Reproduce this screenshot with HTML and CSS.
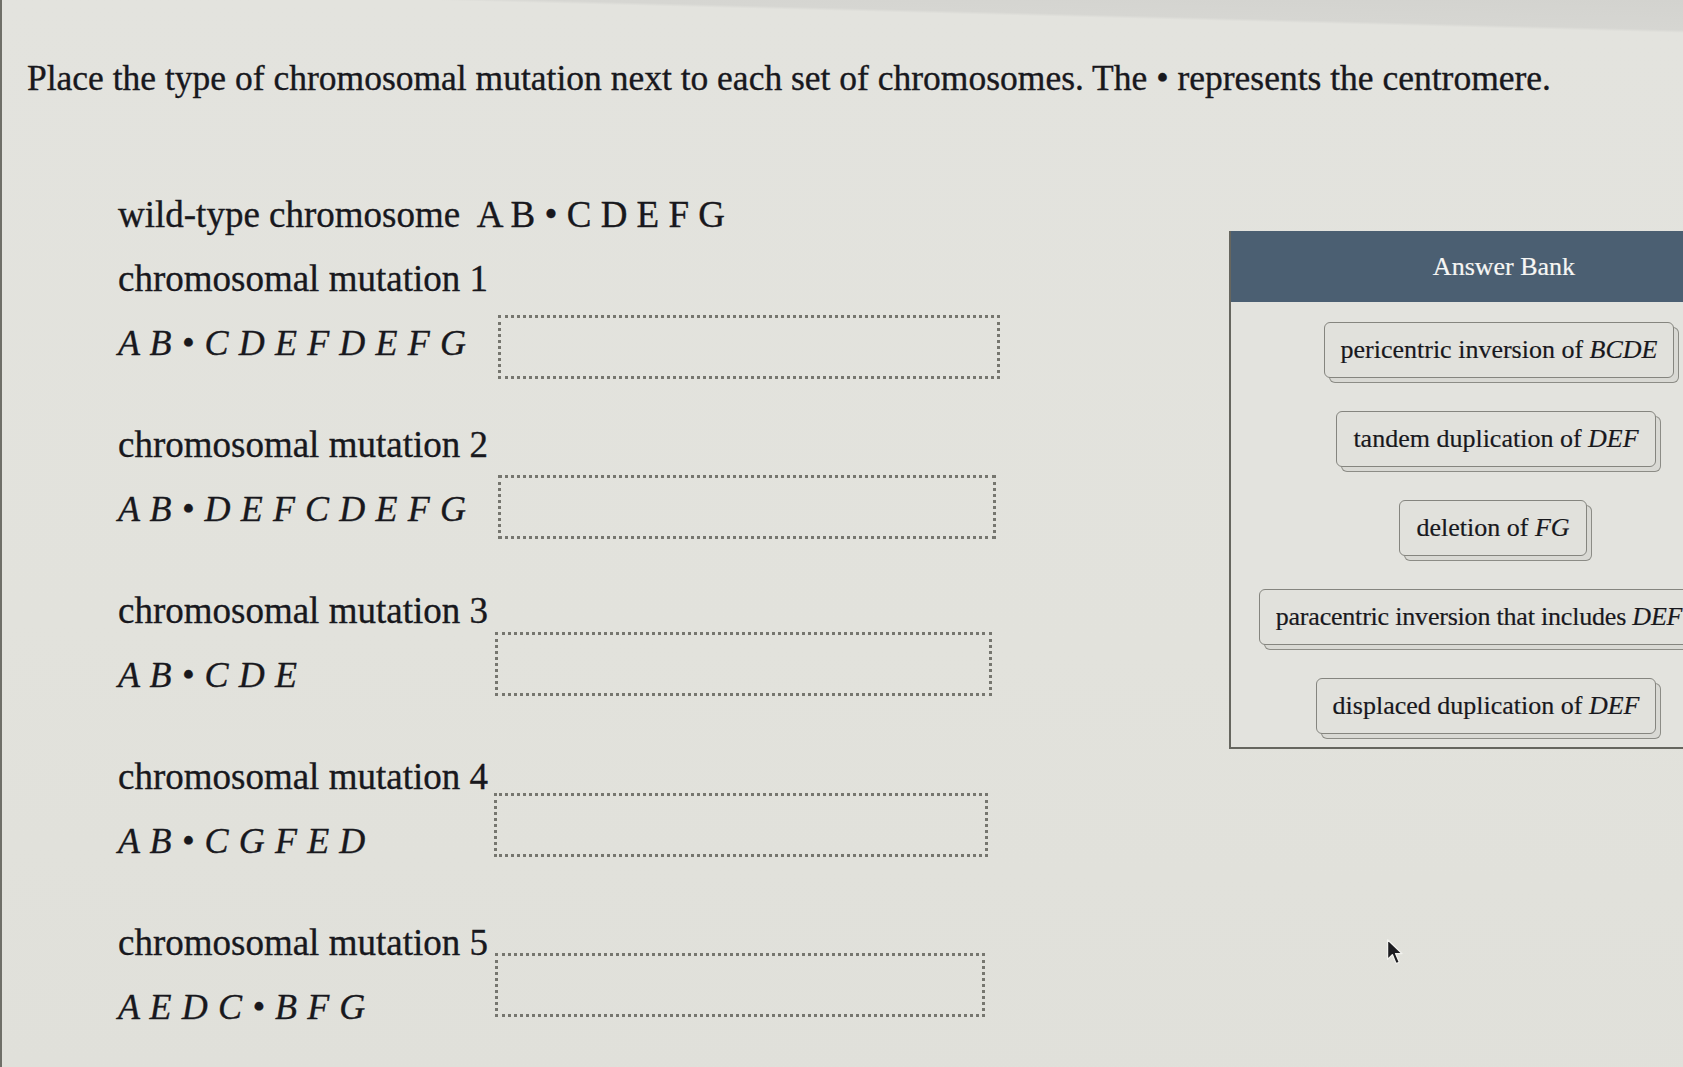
FILE: index.html
```html
<!DOCTYPE html>
<html lang="en">
<head>
<meta charset="utf-8">
<title>Chromosomal mutations</title>
<link rel="stylesheet" href="styles.css">
</head>
<body>
<div class="page">
  <h1 class="prompt">Place the type of chromosomal mutation next to each set of chromosomes. The • represents the centromere.</h1>
  <div class="content">
    <section class="questions">
      <div class="wild">wild-type chromosome&nbsp; A B • C D E F G</div>

      <div class="block">
        <div class="label">chromosomal mutation 1</div>
        <div class="seq">A B • C D E F D E F G</div>
        <div class="drop d1"></div>
      </div>

      <div class="block">
        <div class="label">chromosomal mutation 2</div>
        <div class="seq">A B • D E F C D E F G</div>
        <div class="drop d2"></div>
      </div>

      <div class="block">
        <div class="label">chromosomal mutation 3</div>
        <div class="seq">A B • C D E</div>
        <div class="drop d3"></div>
      </div>

      <div class="block">
        <div class="label">chromosomal mutation 4</div>
        <div class="seq">A B • C G F E D</div>
        <div class="drop d4"></div>
      </div>

      <div class="block">
        <div class="label">chromosomal mutation 5</div>
        <div class="seq">A E D C • B F G</div>
        <div class="drop d5"></div>
      </div>
    </section>

    <aside class="bank">
      <div class="bank-head">Answer Bank</div>
      <div class="bank-body">
        <div class="chip c1">pericentric inversion of <i>BCDE</i></div>
        <div class="chip c2">tandem duplication of <i>DEF</i></div>
        <div class="chip c3">deletion of <i>FG</i></div>
        <div class="chip c4">paracentric inversion that includes <i>DEF</i></div>
        <div class="chip c5">displaced duplication of <i>DEF</i></div>
      </div>
    </aside>
  </div>

  <svg class="cursor" width="17" height="30" viewBox="0 0 16 28" aria-hidden="true">
    <path d="M1.5 1.5 L1.5 20 L6 15.5 L9.5 24 L12.5 22.7 L9 14.5 L15 14.5 Z" fill="#1c1c20" stroke="#f2f2ee" stroke-width="1.2" stroke-linejoin="round"/>
  </svg>
</div>
</body>
</html>
```

FILE: styles.css
```css
html, body {
  margin: 0;
  padding: 0;
  width: 1683px;
  height: 1067px;
  overflow: hidden;
}

body {
  font-family: "Liberation Serif", "Times New Roman", serif;
  color: #18181d;
  background:
    linear-gradient(181.5deg, #d3d3cf 0, #d6d6d2 30px, #e3e3de 33px, #e2e2dc 60%, #e0e0da 100%);
}

.page {
  position: relative;
  height: 1067px;
  box-sizing: border-box;
  border-left: 2px solid #6f6f68;
  padding-left: 25px;
  overflow: hidden;
  -webkit-text-stroke: 0.35px currentColor;
}

.prompt {
  margin: 58px 0 0 0;
  font-weight: normal;
  font-size: 35.5px;
  line-height: 40px;
  white-space: nowrap;
}

.content {
  display: flex;
  align-items: flex-start;
}

.questions {
  margin-left: 91px;
  margin-top: 85px;
  width: 880px;
  flex: none;
  font-size: 37px;
}

.wild {
  line-height: 64px;
  height: 64px;
}

.block {
  display: grid;
  grid-template-columns: 380px 500px;
  grid-template-rows: 64px 64px;
  margin-bottom: 38px;
}

.label {
  grid-column: 1;
  grid-row: 1;
  line-height: 64px;
}

.seq {
  grid-column: 1;
  grid-row: 2;
  line-height: 64px;
  font-size: 36px;
  font-style: italic;
  letter-spacing: 0.6px;
}

.drop {
  grid-column: 2;
  grid-row: 2;
  align-self: center;
  height: 64px;
  box-sizing: border-box;
  border: 3px dotted #76766f;
}

.d1 { margin-top: 8px; width: 502px; }
.d2 { margin-top: -4px; width: 498px; }
.d3 { margin-top: -22px; margin-left: -3px; width: 497px; }
.d4 { margin-top: -32px; margin-left: -4px; width: 494px; }
.d5 { margin-top: -44px; margin-left: -3px; width: 490px; }

.bank {
  margin-left: 231px;
  margin-top: 133px;
  width: 516px;
  flex: none;
  border-left: 2px solid #66665f;
  border-bottom: 2px solid #66665f;
  background: #e3e3de;
  -webkit-text-stroke: 0.2px currentColor;
}

.bank-head {
  height: 71px;
  line-height: 71px;
  background: #4b5f72;
  color: #f6f6f4;
  text-align: center;
  font-size: 26px;
  padding-left: 30px;
}

.bank-body {
  display: flex;
  flex-direction: column;
  align-items: center;
  gap: 33px;
  padding: 20px 0 13px 0;
}

.chip {
  font-size: 26px;
  line-height: 30px;
  padding: 12px 16px;
  white-space: nowrap;
  background: #e1e1dc;
  border: 1.5px solid #85857f;
  border-radius: 6px;
  box-shadow: 5px 5px 0 -1px #d9d9d4, 5px 5px 0 0 #8c8c86;
}

.chip i {
  font-style: italic;
}

.c1 { margin-left: 20px; }
.c2 { margin-left: 14px; }
.c3 { margin-left: 8px; }
.c4 { margin-left: -20px; letter-spacing: -0.2px; }
.c5 { margin-left: -6px; }

.cursor {
  position: absolute;
  left: 1384px;
  top: 938px;
}
```
